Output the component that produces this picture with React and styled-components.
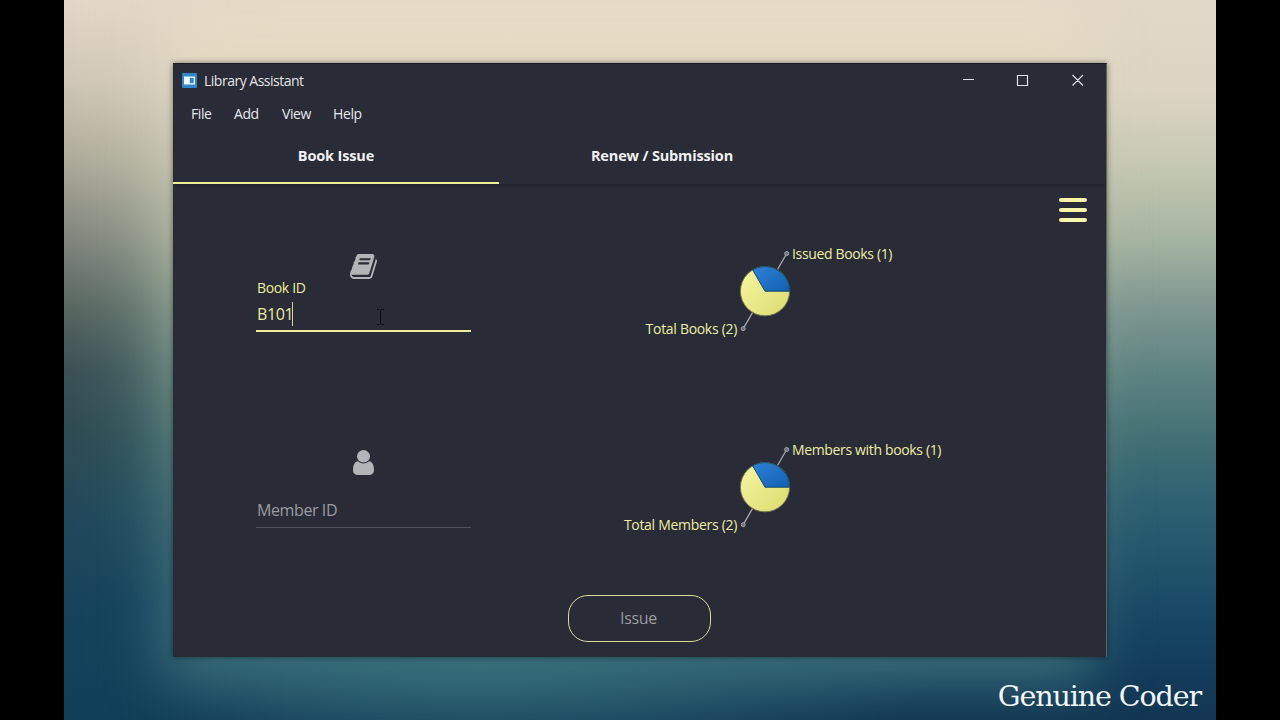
import React, { useState } from "react";
import styled, { createGlobalStyle } from "styled-components";

const menus = [
  { label: "File", width: 21 },
  { label: "Add", width: 26 },
  { label: "View", width: 29 },
  { label: "Help", width: 29 },
];

const tabs = ["Book Issue", "Renew / Submission"];

function UserIcon() {
  return (
    <svg width="21" height="25" viewBox="0 0 20 25" preserveAspectRatio="none">
      <path
        d="M4.8 11.3C1.4 11.4 0 15.5 0 20.3C0 23 1.6 25 4.2 25H15.8C18.4 25 20 23 20 20.3C20 15.5 18.6 11.4 15.2 11.3C13.8 12.6 12 13.4 10 13.4S6.2 12.6 4.8 11.3Z"
        fill="#b3b4b7"
      />
      <circle cx="10" cy="6.3" r="6.2" fill="#b3b4b7" />
    </svg>
  );
}

function BookIcon() {
  return (
    <svg width="27" height="25" viewBox="0 0 1664 1536" preserveAspectRatio="none">
      <path
        fill="#b3b4b7"
        d="M1639 350q40 57 18 129l-275 906q-19 64-76.500 107.500T1183 1536H260q-77 0-148.500-53.500T12 1351q-24-67-2-127q0-4 3-27t4-37q1-8-3-21.500t-3-19.500q2-11 8-21t16.500-23.500T52 1051q23-38 45-91.500t30-91.500q3-10 .5-30t-.5-28q3-11 17-28t17-23q21-36 42-92t25-90q1-9-2.500-32t.5-28q4-13 22-30.500t22-22.500q19-26 42.500-84.500T340 283q1-8-3-25.500t-2-26.500q2-8 9-18t18-23t17-21q8-12 16.500-30.500t15-35t16-36t19.500-32T469.500 12t36-11.500T553 6l-1 3q38-9 51-9h761q74 0 114 56t18 130l-274 906q-36 119-71.500 153.500T1022 1280H153q-27 0-38 15q-11 16-1 43q24 70 144 70h923q29 0 56-15.500t35-41.500l300-987q7-22 5-57q38 15 59 43zM575 352q-4 13 2 22.500t20 9.500h608q13 0 25.500-9.500T1247 352l21-64q4-13-2-22.500t-20-9.500H638q-13 0-25.500 9.500T596 288zm-83 256q-4 13 2 22.500t20 9.500h608q13 0 25.500-9.500T1164 608l21-64q4-13-2-22.500t-20-9.500H555q-13 0-25.500 9.500T513 544z"
      />
    </svg>
  );
}

function PieChart({ id, issued, total }) {
  return (
    <ChartRow>
      <TotalLabel>{total}</TotalLabel>
      <Pie width="54" height="84" viewBox="738 249 54 84">
        <defs>
          <linearGradient id={`${id}-yellow`} x1="0" y1="0" x2="1" y2="1">
            <stop offset="0" stopColor="#f7f6a3" />
            <stop offset="1" stopColor="#dcdc70" />
          </linearGradient>
          <linearGradient id={`${id}-blue`} x1="0" y1="0" x2="1" y2="1">
            <stop offset="0" stopColor="#2c83d6" />
            <stop offset="1" stopColor="#125fb2" />
          </linearGradient>
        </defs>
        <path d="M777.500 269.500L786.700 253.500M752.500 312.700L743.200 328.700" stroke="#a7a8af" strokeWidth="1.300" />
        <circle cx="786.700" cy="253.500" r="2" fill="#70727b" stroke="#a7a8af" />
        <circle cx="743.200" cy="328.700" r="2" fill="#70727b" stroke="#a7a8af" />
        <circle cx="765" cy="291.200" r="24.600" fill={`url(#${id}-yellow)`} stroke="#74764f" />
        <path
          d="M765 291.200H789.600A24.600 24.600 0 0 0 752.700 269.900Z"
          fill={`url(#${id}-blue)`}
          stroke="#194c68"
        />
      </Pie>
      <ChartLabel>{issued}</ChartLabel>
    </ChartRow>
  );
}

function App() {
  const [activeTab, setActiveTab] = useState(0);

  return (
    <Desktop>
      <GlobalStyle />
      <Wallpaper>
        <Window>
          <TitleBar>
            <AppIcon width="15" height="15" viewBox="0 0 15 15">
              <rect width="15" height="15" rx="1" fill="#2f87cb" />
              <rect x="2" y="3.500" width="11" height="8" fill="#f4faff" />
              <rect x="7.800" y="4.800" width="3.900" height="5.400" fill="#2f87cb" />
            </AppIcon>
            <Title>Library Assistant</Title>
            <Controls width="122" height="14" viewBox="0 0 122 14">
              <path d="M1 6.500H12M55.500 2.500H65.500V12.500H55.500ZM110.500 2L121 12.500M121 2L110.500 12.500" />
            </Controls>
          </TitleBar>
          <MenuBar>
            {menus.map((menu) => (
              <MenuItem key={menu.label} $width={menu.width}>
                {menu.label}
              </MenuItem>
            ))}
          </MenuBar>
          <TabBar>
            {tabs.map((tab, index) => (
              <Tab key={tab} $active={index === activeTab} onClick={() => setActiveTab(index)}>
                {tab}
              </Tab>
            ))}
          </TabBar>
          <Content>
            <Hamburger>
              <Bar />
              <Bar />
              <Bar />
            </Hamburger>
            <Section>
              <Field>
                <IconSlot>
                  <BookIcon />
                </IconSlot>
                <FloatLabel>Book ID</FloatLabel>
                <Input $active>
                  B101
                  <Caret />
                  <Pointer width="7" height="16" viewBox="0 0 7 16">
                    <path d="M0 .5H2.500L3.500 1.500L4.500 .5H7M3.500 1.500V14.500M0 15.500H2.500L3.500 14.500L4.500 15.500H7" />
                  </Pointer>
                </Input>
              </Field>
              <PieChart id="books" total="Total Books (2)" issued="Issued Books (1)" />
            </Section>
            <Section>
              <Field>
                <IconSlot>
                  <UserIcon />
                </IconSlot>
                <FloatLabel />
                <Input>Member ID</Input>
              </Field>
              <PieChart id="members" total="Total Members (2)" issued="Members with books (1)" />
            </Section>
            <IssueButton>Issue</IssueButton>
          </Content>
        </Window>
        <Watermark>Genuine Coder</Watermark>
      </Wallpaper>
    </Desktop>
  );
}

const GlobalStyle = createGlobalStyle`
  * {
    box-sizing: border-box;
  }
  body {
    margin: 0;
    background: #000;
    font-family: "Open Sans", "Noto Sans", sans-serif;
  }
`;

const Desktop = styled.div`
  width: 1280px;
  height: 720px;
  padding: 0 64px;
  background: #000;
  overflow: hidden;
`;

const Wallpaper = styled.div`
  position: relative;
  isolation: isolate;
  height: 720px;
  padding: 63px 0 0 109px;
  overflow: hidden;
  background:
    radial-gradient(ellipse 460px 110px at 36% 93%, rgba(52, 112, 124, 0.75), transparent),
    linear-gradient(
      #e2d8c6 0,
      #ddd5c2 90px,
      #c6c9b2 165px,
      #a5b4a1 240px,
      #7d9690 310px,
      #5f8483 370px,
      #447175 435px,
      #2e6171 500px,
      #22556c 560px,
      #174663 620px,
      #123b59 680px,
      #123653 720px
    );

  /* darker left side */
  &::before {
    content: "";
    position: absolute;
    z-index: -2;
    inset: 0 auto 0 0;
    width: 220px;
    background: linear-gradient(
      #e3d7c6 0,
      #d0c7b6 80px,
      #aeab9a 160px,
      #80857d 240px,
      #576660 310px,
      #3b5155 370px,
      #2e4b53 435px,
      #23495a 510px,
      #16425b 610px,
      #11405a 720px
    );
    mask-image: linear-gradient(to right, #000 10px, transparent);
  }

  /* soft light behind the window */
  &::after {
    content: "";
    position: absolute;
    z-index: -1;
    inset: 10px 124px 40px 100px;
    background: linear-gradient(
      #ede1cb 0,
      #d9d2bc 90px,
      #b6bba4 220px,
      #8fa38f 310px,
      #64897f 410px,
      #487579 510px,
      #3d6e77 600px,
      #3a717b 670px
    );
    filter: blur(28px);
  }
`;

const Window = styled.div`
  width: 934px;
  height: 594px;
  background: #292b36;
  border-top: 1px solid #191a22;
  border-right: 1px solid #5f6469;
  box-shadow: 0 0 6px rgba(0, 0, 0, 0.45);
`;

const TitleBar = styled.div`
  display: flex;
  align-items: center;
  height: 32px;
  padding: 0 22px 0 9px;
`;

const AppIcon = styled.svg`
  margin-right: 7px;
`;

const Title = styled.div`
  flex: 1;
  color: #e4e4e8;
  font-size: 14px;
  letter-spacing: -0.5px;
`;

const Controls = styled.svg`
  fill: none;
  stroke: #e0e1e8;
  stroke-width: 1.2;
`;

const MenuBar = styled.div`
  display: flex;
  gap: 22px;
  height: 34px;
  padding-left: 18px;
  align-items: center;
`;

const MenuItem = styled.div`
  width: ${(props) => props.$width}px;
  color: #e8e8ec;
  font-size: 14px;
  letter-spacing: -0.4px;
  white-space: nowrap;
`;

const TabBar = styled.div`
  display: flex;
  height: 54px;
  box-shadow: 0 3px 3px -2px rgba(0, 0, 0, 0.3);
`;

const Tab = styled.div`
  width: 326px;
  padding-top: 16px;
  border-bottom: 2px solid ${(props) => (props.$active ? "#eeee9b" : "transparent")};
  color: #f0f0f3;
  font-size: 14.5px;
  font-weight: 700;
  line-height: 20px;
  letter-spacing: -0.15px;
  text-align: center;
`;

const Content = styled.div`
  display: flex;
  flex-direction: column;
  height: 473px;
`;

const Hamburger = styled.div`
  display: flex;
  flex-direction: column;
  align-self: flex-end;
  gap: 6px;
  margin: 14px 19px 0 0;
`;

const Bar = styled.div`
  width: 28px;
  height: 4px;
  border-radius: 2px;
  background: #f6f5a8;
`;

const Section = styled.div`
  display: flex;
  height: 196px;
  padding: 27px 0 0 83px;
`;

const Field = styled.div`
  display: flex;
  flex-direction: column;
  width: 215px;
`;

const IconSlot = styled.div`
  display: flex;
  justify-content: center;
  align-items: center;
  height: 34px;
  padding-right: 1px;
`;

const FloatLabel = styled.div`
  height: 18px;
  margin-top: -4px;
  padding-left: 1px;
  color: #eeee9c;
  font-size: 14px;
  line-height: 18px;
  letter-spacing: -0.35px;
`;

const Input = styled.div`
  position: relative;
  display: flex;
  align-items: center;
  height: 35px;
  padding: ${(props) => (props.$active ? "1px 0 0 1px" : "0 0 1px 1px")};
  border-bottom: ${(props) => (props.$active ? "2px solid #f0ee9e" : "1px solid #50525a")};
  color: ${(props) => (props.$active ? "#e9e9a0" : "#9b9ca2")};
  font-size: 16px;
  letter-spacing: -0.4px;
`;

const Caret = styled.div`
  width: 1px;
  height: 24px;
  margin-left: -1px;
  background: #d0d0b0;
`;

const Pointer = styled.svg`
  position: absolute;
  left: 121px;
  top: 12px;
  fill: none;
  stroke: #0b0c12;
`;

const ChartRow = styled.div`
  display: flex;
  align-items: flex-start;
  width: 520px;
  height: 84px;
`;

const Pie = styled.svg`
  flex: none;
`;

const ChartLabel = styled.div`
  margin-top: -4px;
  color: #eeeea2;
  font-size: 14px;
  line-height: 18px;
  letter-spacing: -0.35px;
  white-space: nowrap;
`;

const TotalLabel = styled(ChartLabel)`
  width: 267px;
  margin-top: 71px;
  padding-right: 1px;
  letter-spacing: -0.3px;
  text-align: right;
`;

const IssueButton = styled.button`
  align-self: center;
  width: 143px;
  height: 47px;
  margin-top: -19px;
  padding: 0 2px 1px 0;
  border: 1px solid #dcdc92;
  border-radius: 20px;
  background: transparent;
  color: #9b9ca3;
  font-family: inherit;
  font-size: 16px;
  letter-spacing: -0.3px;
`;

const Watermark = styled.div`
  position: absolute;
  right: 15px;
  bottom: 7px;
  color: #f2f6fa;
  font-family: "DejaVu Serif", serif;
  font-size: 28.5px;
  letter-spacing: -1.1px;
`;

export default App;
